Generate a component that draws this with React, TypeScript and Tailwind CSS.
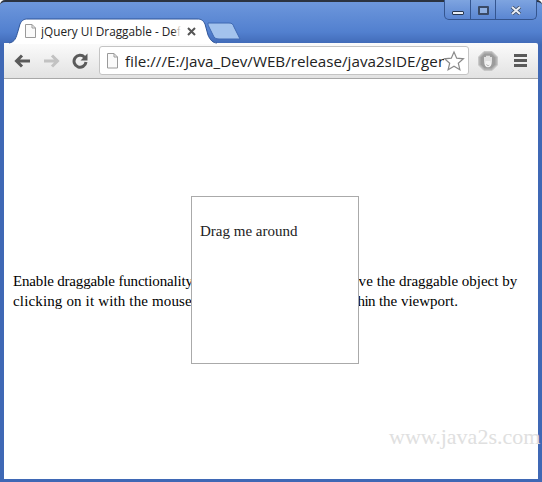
export default function App() {
  return (
    <div className="relative w-[542px] h-[482px] overflow-hidden bg-white">
      <div className="flex flex-col w-full h-full rounded-t-[5px] border-t-2 border-[#2b3340] bg-[linear-gradient(#6d97dc_0%,#5280cf_30px,#3f68b5_43px)] pl-[4px] pr-[4px] pb-[3px]">
        <div className="relative h-[41px] shrink-0 -mx-[1px]">
          <svg className="absolute left-[0px] top-[16px]" width="240" height="26" viewBox="0 0 240 26">
            <path d="M6 26 L6 25 C12 24 13 20 15 13 L17 6 C19 2 21 1 25 1 L194 1 C198 1 200 2 202 6 L205 17 C207 22 210 25 214 25 L214 26 Z" fill="#ffffff" />
            <path d="M6 25 C12 24 13 20 15 13 L17 6 C19 2 21 1 25 1 L194 1 C198 1 200 2 202 6 L205 17 C207 22 210 25 214 25" fill="none" stroke="#2f5599" strokeWidth="1" />
            <path d="M205 5 L226 5 C229 5 230 6 231 9 L237 21 L216 21 C213 21 211 20 210 17 L206 9 C205 7 205 6 205 5 Z" fill="#a3c3ed" stroke="#3f69b2" strokeWidth="1" />
          </svg>
          <svg className="absolute left-[20px] top-[21px]" width="15" height="16" viewBox="0 0 15 16" fill="#fafafa" stroke="#9a9a9a">
            <path d="M2.5 1.5 H9 L12.5 5 V14.5 H2.5 Z" />
            <path d="M9 1.5 V5 H12.5" fill="none" />
          </svg>
          <div className="absolute left-[38px] top-[20px] w-[141px] overflow-hidden whitespace-nowrap font-['Open_Sans',sans-serif] text-[11.8px] leading-[18px] text-[#222]">jQuery UI Draggable - Default</div>
          <div className="absolute left-[170px] top-[20px] w-[10px] h-[18px] bg-[linear-gradient(to_right,rgba(255,255,255,0),#fff_80%)]" />
          <svg className="absolute left-[184px] top-[25px]" width="9" height="9" viewBox="0 0 9 9" stroke="#555" strokeWidth="2">
            <path d="M1 1 L8 8 M8 1 L1 8" />
          </svg>
          <div className="absolute right-[2px] -top-[2px] flex h-[20px] w-[93px] rounded-b-[5px] border border-t-0 border-[#34558f] bg-[linear-gradient(#7ea4e0,#5a86d2)]">
            <div className="flex w-[26px] items-center justify-center border-r border-[#34558f]">
              <div className="mt-[7px] h-[4px] w-[12px] rounded-[1px] border border-[#26364f] bg-[#e8edf5]" />
            </div>
            <div className="flex w-[25px] items-center justify-center border-r border-[#34558f]">
              <div className="mt-[2px] h-[9px] w-[11px] rounded-[1px] border-2 border-[#3a4a66] bg-[#8fb0e2]" />
            </div>
            <div className="flex flex-1 items-center justify-center">
              <svg className="mt-[2px]" width="12" height="9" viewBox="0 0 12 9">
                <path d="M2 1 L10 8 M10 1 L2 8" stroke="#3a4a66" strokeWidth="3.6" />
                <path d="M2 1 L10 8 M10 1 L2 8" stroke="#e8edf5" strokeWidth="2" />
              </svg>
            </div>
          </div>
        </div>
        <div className="flex h-[36px] shrink-0 items-center border-b border-[#a8a8a8] bg-[linear-gradient(#fbfbfb,#e2e2e2)] rounded-tr-[2px]">
          <svg className="ml-[10px]" width="17" height="14" viewBox="0 0 17 14" fill="none" stroke="#5a5a5a" strokeWidth="3">
            <path d="M16 7 H3 M8 1.5 L2.5 7 L8 12.5" />
          </svg>
          <svg className="ml-[12px]" width="17" height="14" viewBox="0 0 17 14" fill="none" stroke="#c2c2c2" strokeWidth="3">
            <path d="M1 7 H14 M9 1.5 L14.5 7 L9 12.5" />
          </svg>
          <svg className="ml-[12px]" width="16" height="16" viewBox="0 0 16 16" fill="none">
            <path d="M12.5 4.2 A6 6 0 1 0 14 9" stroke="#5a5a5a" strokeWidth="3" />
            <path d="M15.5 .5 V7.5 H8.5 Z" fill="#5a5a5a" />
          </svg>
          <div className="ml-[11px] flex h-[29px] w-[370px] items-center overflow-hidden rounded-[3px] border border-[#c4c4c4] bg-white">
            <svg className="ml-[6px] shrink-0" width="13" height="16" viewBox="0 0 13 16" fill="#fafafa" stroke="#9a9a9a">
              <path d="M1.5 .5 H8 L11.5 4 V15 H1.5 Z" />
              <path d="M8 .5 V4 H11.5" fill="none" />
            </svg>
            <div className="ml-[6px] w-[319px] overflow-hidden whitespace-nowrap font-['Open_Sans',sans-serif] text-[15.2px] leading-[22px] text-[#222]">file:///E:/Java_Dev/WEB/release/java2sIDE/gen</div>
            <svg className="shrink-0 -ml-[1px]" width="22" height="22" viewBox="0 0 22 22" fill="#fff" stroke="#8a8a8a" strokeWidth="1.2">
              <path d="M11 2 L13.7 8.2 L20.4 8.8 L15.3 13.2 L16.9 19.8 L11 16.3 L5.1 19.8 L6.7 13.2 L1.6 8.8 L8.3 8.2 Z" />
            </svg>
          </div>
          <svg className="ml-[9px]" width="20" height="20" viewBox="0 0 20 20">
            <path d="M6 .5 H14 L19.5 6 V14 L14 19.5 H6 L.5 14 V6 Z" fill="#b4b4b4" stroke="#c8c8c8" />
            <path d="M6.5 2.5 H13.5 L17.5 6.5 V13.5 L13.5 17.5 H6.5 L2.5 13.5 V6.5 Z" fill="#9c9c9c" />
            <path d="M7 10 V6 M9 10 V4.8 M11 10 V4.8 M13 10.5 V6 M7 10 C7 13 8 15.5 10 15.5 C12 15.5 13 13 13 10.5" stroke="#f2f2f2" strokeWidth="1.6" fill="none" />
            <path d="M7.5 10 H12.5 V13 C12 14.5 8.5 14.5 7.5 12 Z" fill="#f2f2f2" />
          </svg>
          <div className="ml-[16px] flex w-[13px] flex-col gap-[2px]">
            <div className="h-[3px] bg-[#5a5a5a]" />
            <div className="h-[3px] bg-[#5a5a5a]" />
            <div className="h-[3px] bg-[#5a5a5a]" />
          </div>
        </div>
        <div className="relative flex flex-1 items-center bg-white font-['Liberation_Serif',serif] text-[15px] leading-[20px] text-black">
          <p className="px-[9px] pt-[24px]">
            <span className="tracking-[-0.17px]">Enable draggable functionality</span>{" "}
            <span className="tracking-[0.15px]">on any DOM element. Move</span> the draggable object by{" "}
            <span className="tracking-[0.15px]">clicking on it with the mouse</span>{" "}
            <span className="tracking-[-0.5px]">and dragging it anywhere within</span> the viewport.
          </p>
          <div className="absolute left-[187px] top-[117px] h-[168px] w-[168px] border border-[#aaa] bg-white px-[8px] pt-[24px] text-[#222]">Drag me around</div>
          <div className="absolute left-[385px] top-[346px] whitespace-nowrap text-[22px] leading-[24px] text-[#e0e0e0]">www.java2s.com</div>
        </div>
      </div>
    </div>
  );
}
